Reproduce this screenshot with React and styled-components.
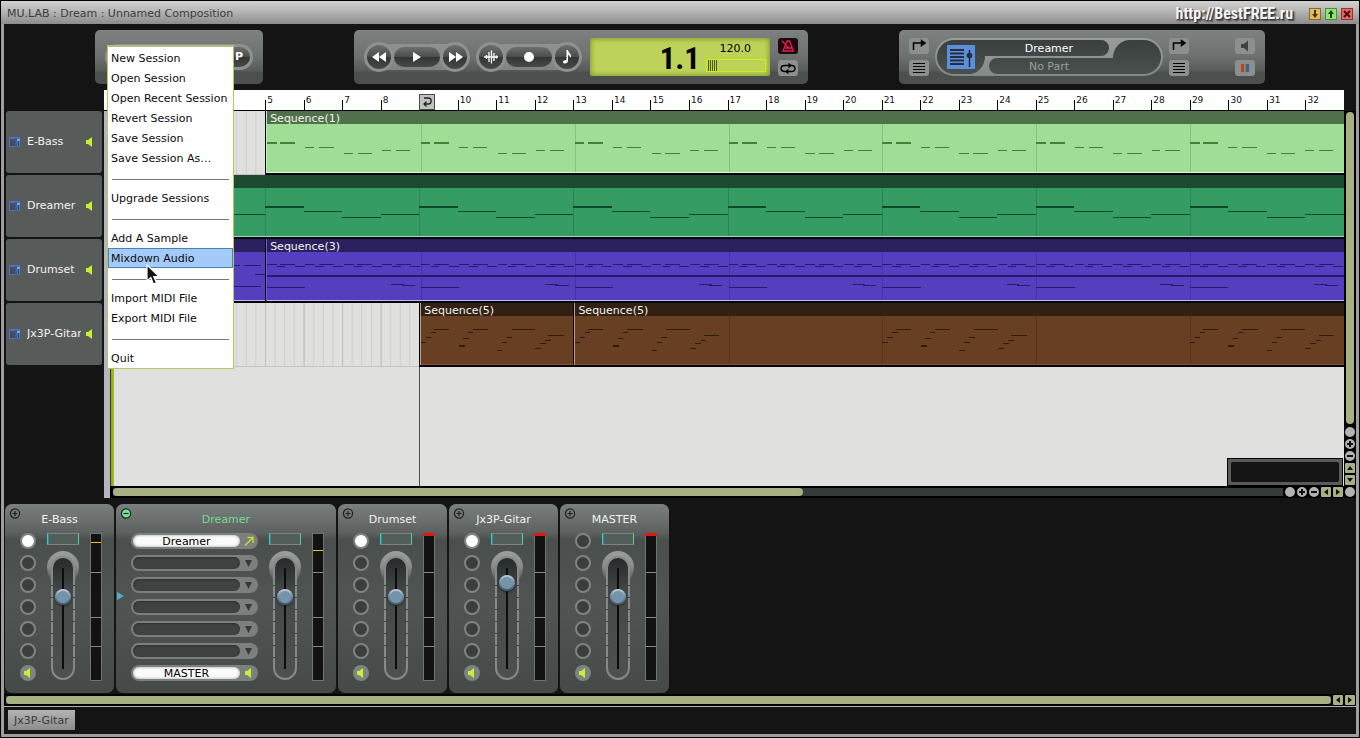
import React from "react";
import styled, { createGlobalStyle, css } from "styled-components";

const GlobalStyle = createGlobalStyle`
  * {
    box-sizing: border-box;
  }

  body {
    margin: 0;
    background: #000;
    font-family: "DejaVu Sans", "Liberation Sans", sans-serif;
    font-size: 11px;
    line-height: 14px;
  }

  button {
    margin: 0;
    padding: 0;
    border: 0;
    font: inherit;
    color: inherit;
    background: none;
  }

  svg {
    display: block;
    flex: none;
  }
`;

const Window = styled.div`
  min-height: 100vh;
  border: 1px solid #000;
  display: flex;
  flex-direction: column;
`;

const TitleBar = styled.header`
  height: 23px;
  padding: 3px 6px 0;
  display: flex;
  align-items: center;
  gap: 4px;
  color: #3c3c3c;
  background: linear-gradient(#d2d2d2, #b9b9b9 40%, #8c8c8c);
`;

const WindowTitle = styled.h1`
  margin: 0;
  flex: 1;
  font-size: 11px;
  font-weight: 400;
`;

const SiteLink = styled.a`
  margin-right: 12px;
  font-family: "Liberation Sans Narrow", "Roboto Condensed", "Liberation Sans", sans-serif;
  font-size: 16px;
  font-weight: 700;
  color: #f4f4f4;
  text-decoration: none;
  text-shadow: 1px 1px 1px #333, 2px 2px 2px #444;
`;

const WindowButton = styled.button`
  width: 12px;
  height: 12px;
  border: 1px solid ${(p) => p.$edge};
  background: ${(p) => p.$fill};
`;

const Body = styled.div`
  flex: 1;
  display: flex;
  flex-direction: column;
  border: 3px solid #a09da0;
  border-top: 0;
  background: #141414;
`;

/* ---------- toolbar ---------- */

const Toolbar = styled.div`
  height: 66px;
  display: flex;
  align-items: center;
  justify-content: space-evenly;
`;

const Panel = styled.section`
  position: relative;
  height: 54px;
  padding: 0 10px;
  display: flex;
  align-items: center;
  border-radius: 5px;
  background: linear-gradient(#7d817f, #6c706e 50%, #565b59 76%, #4b504e 78%, #4b504e);
`;

const ButtonGroup = styled.div`
  display: flex;
  align-items: center;
  margin-right: ${(p) => p.$after}px;
  background: linear-gradient(#8d918f, #7e8280) center / 76px 26px no-repeat;
`;

const darkGlass = css`
  background: linear-gradient(#6a6f6d, #4b504e 48%, #323735 52%, #464b49);
`;

const RoundButton = styled.button`
  width: 30px;
  height: 30px;
  border: 3px solid #8d918f;
  border-radius: 50%;
  ${darkGlass}
`;

const PillButton = styled.button`
  width: 46px;
  height: 20px;
  border-radius: 10px;
  ${darkGlass}
`;

const HelpGroup = styled.div`
  width: 148px;
  height: 26px;
  padding: 3px;
  border-radius: 13px;
  display: flex;
  gap: 3px;
  background: #8d918f;
`;

const HelpButton = styled.button`
  flex: 1;
  padding-right: 7px;
  border-radius: 10px;
  color: #fff;
  font-weight: 700;
  text-align: right;
  ${darkGlass}
`;

const Lcd = styled.div`
  width: 180px;
  height: 38px;
  padding-right: 4px;
  margin-right: 8px;
  display: flex;
  align-items: center;
  justify-content: flex-end;
  gap: 6px;
  border-radius: 3px;
  color: #000;
  background: #bcd258;
  box-shadow: inset 0 0 5px 1px #7f9a2c;
`;

const Position = styled.output`
  padding-top: 3px;
  font-family: "Liberation Sans Narrow", "Roboto Condensed", "Liberation Sans", sans-serif;
  font-size: 31px;
  font-weight: 700;
  line-height: 32px;
`;

const TempoColumn = styled.div`
  width: 60px;
  display: flex;
  flex-direction: column;
`;

const Tempo = styled.output`
  padding-right: 15px;
  line-height: 12px;
  text-align: right;
`;

const CpuBar = styled.div`
  height: 13px;
  margin-top: 4px;
  border: 1px solid #d0f010;
  background: repeating-linear-gradient(90deg, #4c5a17 0 1px, transparent 1px 2px) 1px 0 / 9px 100%
    no-repeat;
`;

const SmallColumn = styled.div`
  display: flex;
  flex-direction: column;
  gap: 6px;
  margin-left: ${(p) => p.$before || 0}px;
`;

const SmallButton = styled.button`
  width: 20px;
  height: 16px;
  border-radius: 3px;
  background: ${(p) => (p.$active ? "#1d0a10" : "#8b8f8d")};
`;

const Capsule = styled.div`
  display: grid;
  margin: 0 6px;

  > * {
    grid-area: 1 / 1;
  }
`;

const CapsuleText = styled.div`
  padding: 2px 0 0;
  display: grid;
  grid-template-rows: 18px 18px;
  text-align: center;
  line-height: 18px;
`;

const ModuleName = styled.span`
  color: ${(p) => (p.$dim ? "#9a9e9c" : "#fff")};
`;

/* ---------- menu ---------- */

const Menu = styled.ul`
  position: absolute;
  z-index: 5;
  top: 15px;
  left: 12px;
  width: 127px;
  margin: 0;
  padding: 1px 0 0;
  list-style: none;
  border: 1px solid #b4c85c;
  border-top: 2px solid #b2bd84;
  background: #fff;
  color: #0c0c0c;
`;

const MenuItem = styled.button`
  display: block;
  width: 100%;
  height: 20px;
  padding: 2px 0 0 2px;
  text-align: left;
  white-space: nowrap;
  border: 1px solid ${(p) => (p.$selected ? "#4682b4" : "#fff")};
  background: ${(p) => (p.$selected ? "#a3caf8" : "#fff")};
`;

const MenuLine = styled.li`
  height: 20px;
  padding: 11px 4px 0;

  &::after {
    content: "";
    display: block;
    border-top: 1px solid #6f7a80;
  }
`;

const Pointer = styled.svg`
  position: absolute;
  z-index: 6;
  top: 234px;
  left: 50px;
`;

/* ---------- arranger ---------- */

const Arranger = styled.div`
  flex: 1;
  display: grid;
  grid-template-columns: 100px minmax(0, 1fr) 12px;
  grid-template-rows: 21px minmax(0, 1fr) 12px;
`;

const TrackList = styled.div`
  grid-area: 2 / 1;
  padding-left: 2px;
`;

const TrackHead = styled.div`
  height: 62px;
  width: 96px;
  margin-bottom: 2px;
  padding: 0 7px 0 3px;
  display: flex;
  align-items: center;
  gap: 4px;
  border-radius: 3px;
  background: #575c5a;
  color: #f2f2f2;
`;

const TrackName = styled.span`
  flex: 1;
  margin-left: 3px;
  overflow: hidden;
  white-space: nowrap;
  line-height: 16px;
`;

const Ruler = styled.div`
  grid-area: 1 / 2;
  padding-left: 7px;
  display: grid;
  grid-template-columns: repeat(32, minmax(0, 1fr));
  border-bottom: 1px solid #000;
  background: #fff;
`;

const Bar = styled.span`
  padding: 5px 0 0 2px;
  font-size: 9px;
  line-height: 10px;
  color: #111;
  background: linear-gradient(#000, #000) left bottom / 1px 10px no-repeat;
`;

const LoopFlag = styled.button`
  width: 16px;
  height: 16px;
  margin-top: 4px;
  border: 1px solid #4a4a4a;
  background: #c2c2c2;
`;

const Lanes = styled.div`
  grid-area: 2 / 2;
  position: relative;
  display: flex;
  flex-direction: column;
  border-left: 6px solid #b5b5c1;
  padding-left: 1px;
  background: #e0e0de;
`;

const Lane = styled.div`
  height: 64px;
  display: grid;
  grid-template-columns: repeat(32, minmax(0, 1fr));
  border-bottom: 1px solid #c4c4c2;
  background-image: linear-gradient(90deg, #c0c0be 1px, transparent 1px),
    linear-gradient(90deg, #cdcdcb 1px, transparent 1px);
  background-size: calc(100% / 32) 100%, calc(100% / 128) 100%;
`;

const Clip = styled.div`
  grid-column: ${(p) => p.$from} / ${(p) => p.$to};
  height: 64px;
  padding-left: 2px;
  display: flex;
  flex-direction: column;
  border-bottom: 2px solid #06060c;
  box-shadow: inset 1px 0 #000, inset 2px 0 ${(p) => p.$colors.side};
  background: ${(p) => p.$colors.body};
`;

const OpenClip = styled(Clip)`
  padding-left: 0;
  box-shadow: none;
`;

const ClipName = styled.div`
  height: 13px;
  padding-left: 3px;
  line-height: 16px;
  color: #f4f4ea;
  background: ${(p) => p.$colors.head};
`;

const ClipNotes = styled.svg`
  width: 100%;
  height: 49px;
  border-bottom: 1px solid ${(p) => p.$edge};
`;

const EmptyArea = styled.div`
  flex: 1;
  display: grid;
  grid-template-columns: repeat(32, minmax(0, 1fr));
  grid-template-rows: minmax(0, 1fr);
`;

const LoopLine = styled.div`
  grid-column: 9;
  border-left: 1px solid #4c4c4c;
`;

const Playhead = styled.div`
  position: absolute;
  top: 0;
  bottom: 0;
  left: 0;
  width: 4px;
  border-left: 1px solid #2f4a08;
  background: linear-gradient(90deg, #86a81c, #a9bf2c);
`;

const Overview = styled.div`
  position: absolute;
  right: 1px;
  bottom: 0;
  width: 116px;
  height: 28px;
  border: 1px solid #000;
  padding: 3px;
  background: #5a5a5a;

  &::after {
    content: "";
    display: block;
    height: 20px;
    border-radius: 2px;
    background: #141414;
  }
`;

const ScrollRow = styled.div`
  display: flex;
  align-items: center;
  gap: 2px;
  height: 12px;
  padding: 0 1px 0 ${(p) => p.$start}px;
  background: #000;
`;

const ArrangerScroll = styled(ScrollRow)`
  grid-area: 3 / 2;
  border-left: 6px solid #b5b5c1;
`;

const ScrollColumn = styled.div`
  grid-area: 2 / 3;
  padding: 1px 0;
  display: flex;
  flex-direction: column;
  align-items: center;
  gap: 2px;
  background: #000;
`;

const Corner = styled.div`
  grid-area: 3 / 3;
  display: flex;
  align-items: center;
  justify-content: center;
  background: #000;
`;

const Track = styled.div`
  flex: 1;
  height: 8px;
  background: #363a38;
`;

const VerticalTrack = styled.div`
  flex: 1;
  width: 8px;
  margin-bottom: 1px;
  border-radius: 4px;
  background: #a7b083;
`;

const Thumb = styled.div`
  width: ${(p) => p.$size};
  height: 8px;
  border-radius: 4px;
  background: #a7b083;
`;

const ScrollButton = styled.button`
  width: 10px;
  height: 10px;
  flex: none;
  border-radius: ${(p) => (p.$round ? "50%" : "1px")};
  background: ${(p) => (p.$round ? "#b2b2b2" : "#a7b083")};
`;

/* ---------- mixer ---------- */

const Mixer = styled.div`
  padding: 6px 1px 1px;
  display: flex;
  gap: 2px;
`;

const Strip = styled.section`
  position: relative;
  height: 189px;
  border-radius: 7px;
  background: linear-gradient(#7b7f7d, #5c6160 29px, #4a4f4d 36px, #505553 100px, #454a48);
`;

const StripHead = styled.div`
  height: 29px;
  padding: 4px 4px 0;
  display: grid;
  grid-template-columns: 12px 1fr 12px;
  color: ${(p) => (p.$open ? "#70dc94" : "#f2f2f2")};
`;

const ExpandButton = styled.button`
  width: 12px;
  height: 12px;
`;

const StripName = styled.h2`
  margin: 0;
  padding-top: 5px;
  font-size: 11px;
  font-weight: 400;
  text-align: center;
`;

const StripBody = styled.div`
  height: 148px;
  padding: 0 12px 0 15px;
  display: flex;
  gap: 11px;
`;

const SlotColumn = styled.div`
  display: flex;
  flex-direction: column;
  gap: 6px;
`;

const SlotToggle = styled.input`
  appearance: none;
  width: 16px;
  height: 16px;
  margin: 0;
  border: 2px solid #7f8381;
  border-radius: 50%;
  background: #3a3f3d;

  &:checked {
    background: #fff;
  }
`;

const SpeakerButton = styled.button`
  width: 16px;
  height: 16px;
  padding-left: 3px;
  border-radius: 50%;
  background: #7f8381;
`;

const Slot = styled.div`
  width: 127px;
  height: 16px;
  padding: 2px 4px 2px 2px;
  display: flex;
  align-items: center;
  gap: 4px;
  border-radius: 8px;
  background: #7b7f7d;
`;

const SlotName = styled.button`
  width: 108px;
  height: 12px;
  border-radius: 6px;
  line-height: 14px;
  color: #000;
  background: ${(p) => (p.$used ? "#fbfbfb" : "#3e4341")};
  box-shadow: ${(p) => (p.$used ? "inset 0 0 3px #999" : "inset 0 1px 2px #2c302e")};
`;

const SlotButton = styled.button`
  width: 10px;
  height: 12px;
`;

const FaderColumn = styled.div`
  display: flex;
  flex-direction: column;
  gap: 6px;
`;

const PanBox = styled.div`
  width: 32px;
  height: 12px;
  border: 1px solid #7f8381;
  border-left-color: #3fc6d0;
  border-right-color: #4fd492;
  background: #535e5b;
  box-shadow: inset 1px 0 #2f8d94;
`;

const FaderCell = styled.div`
  display: grid;
  justify-items: center;

  > * {
    grid-area: 1 / 1;
  }
`;

const Fader = styled.input`
  appearance: none;
  writing-mode: vertical-lr;
  direction: rtl;
  width: 16px;
  height: 130px;
  margin: 0;
  background: transparent;

  &::-webkit-slider-thumb {
    appearance: none;
    width: 16px;
    height: 16px;
    border-radius: 50%;
    background: radial-gradient(#7593ab 50%, transparent 56%),
      linear-gradient(#c4d6e2, #6f8ba2 50%, #3e5468);
    box-shadow: 0 1px 2px #222;
  }
`;

const PortMark = styled.svg`
  position: absolute;
  left: 1px;
  top: 88px;
`;

const Footer = styled.footer`
  height: 28px;
  padding: 3px 4px;
  border-top: 1px solid #b5b2b5;
`;

const TabButton = styled.button`
  height: 20px;
  padding: 1px 6px 0;
  color: #3a3a3a;
  background: linear-gradient(#b4b4b4, #8c8c8c);
`;

/* ---------- icons ---------- */

const Speaker = () => (
  <svg width="10" height="10" viewBox="0 0 10 10" fill="#c6f032">
    <path d="M1 3h2L7 0v10L3 7H1z" />
  </svg>
);

const TrackIcon = () => (
  <svg width="11" height="10" viewBox="0 0 11 10">
    <path d="M0 0h11v10H0z" fill="#4a76bd" />
    <path d="M1 2h5v7H1z" fill="#414c60" />
    <path d="M7 1v9M9.500 4v5" stroke="#2c4372" />
    <path d="M8 2h3v2H8z" fill="#7ba4e4" />
  </svg>
);

const Glyph = ({ d, fill = "#fff", stroke }) => (
  <svg width="24" height="24" viewBox="0 0 24 24" fill={fill} stroke={stroke} strokeWidth="1.3">
    <path d={d} />
  </svg>
);

const PillGlyph = ({ d }) => (
  <svg width="46" height="20" viewBox="0 0 46 20" fill="#fff">
    <path d={d} />
  </svg>
);

const ROUTE = "M4.500 12V5H16M12.500 2.500 16 5l-3.500 2.500z";
const LINES = "M4 3.500h12M4 6.500h12M4 9.500h12M4 12.500h12";

const SmallIcon = ({ d, color = "#000", fill = "none", width = 1 }) => (
  <svg width="20" height="16" viewBox="0 0 20 16" fill={fill} stroke={color} strokeWidth={width}>
    <path d={d} />
  </svg>
);

const SCROLL_ICONS = {
  plus: "M2 4h2V2h2v2h2v2H6v2H4V6H2z",
  minus: "M2 4h6v2H2z",
  left: "M7 2v6L3 5z",
  right: "M3 2v6l4-3z",
  up: "M2 7h6L5 3z",
  down: "M2 3h6L5 7z",
};

function ScrollIcon({ name, label }) {
  return (
    <ScrollButton $round={!name || name === "plus" || name === "minus"} aria-label={label}>
      <svg width="10" height="10" viewBox="0 0 10 10" fill="#111">
        {name && <path d={SCROLL_ICONS[name]} />}
      </svg>
    </ScrollButton>
  );
}

/* ---------- data ---------- */

const MENU = [
  "New Session",
  "Open Session",
  "Open Recent Session",
  "Revert Session",
  "Save Session",
  "Save Session As…",
  null,
  "Upgrade Sessions",
  null,
  "Add A Sample",
  "Mixdown Audio",
  null,
  "Import MIDI File",
  "Export MIDI File",
  null,
  "Quit",
];

// notes are [start, end, y, height], start and end in hundredths of a bar
const BASS = [
  [0, 25, 18, 2], [35, 74, 18, 2],
  [100, 123, 23, 1], [136, 173, 23, 1],
  [200, 224, 29, 1], [236, 274, 29, 1],
  [300, 323, 26, 1], [336, 373, 26, 1],
];

const PAD = [
  [0, 100, 18, 2],
  [100, 200, 23, 1],
  [200, 300, 29, 1],
  [300, 400, 26, 1],
];

const HATS = [0, 100, 200, 300].flatMap((x) => [
  [x, x + 25, 12, 1],
  [x + 35, x + 74, 12, 1],
  [x + 26, x + 48, 14, 1],
  [x + 72, x + 98, 14, 1],
]);

const DRUMS = [...HATS, [0, 400, 23, 2], [0, 100, 35, 1], [323, 356, 32, 1], [350, 384, 33, 1]];

const DRUM_INTRO = [[300, 335, 13, 1], [345, 388, 13, 1], [374, 400, 22, 1], [300, 390, 34, 1]];

const GUITAR = [
  [0, 14, 26, 1], [12, 27, 21, 1], [25, 40, 16, 1], [35, 74, 13, 1],
  [100, 115, 29, 2], [111, 126, 22, 1], [124, 138, 16, 1], [136, 177, 13, 1],
  [200, 214, 34, 1], [213, 227, 26, 1], [225, 240, 21, 1], [238, 300, 13, 1],
  [300, 315, 32, 1], [313, 328, 27, 1], [327, 341, 24, 1], [335, 375, 19, 1],
];

const GREEN = {
  body: "#a0de97", head: "#50704c", line: "#86c47e", note: "#3f8432", edge: "#e4f6e0", side: "#c4ecbe",
};
const TEAL = {
  body: "#359c63", head: "#1c4b30", line: "#2b8453", note: "#0e4a2a", edge: "#a9d4bc", side: "#359c63",
};
const VIOLET = {
  body: "#553fbe", head: "#2b205e", line: "#4733a2", note: "#291a70", edge: "#c4bbea", side: "#6f5ccc",
};
const BROWN = {
  body: "#683f23", head: "#312115", line: "#58341c", note: "#321a08", edge: "#7c553a", side: "#b9a090",
};

const TRACKS = [
  { name: "E-Bass", clips: [{ from: 5, to: 33, name: "Sequence(1)", notes: BASS, colors: GREEN }] },
  { name: "Dreamer", clips: [{ from: 1, to: 33, notes: PAD, colors: TEAL }] },
  {
    name: "Drumset",
    clips: [
      { from: 1, to: 5, notes: DRUM_INTRO, colors: VIOLET },
      { from: 5, to: 33, name: "Sequence(3)", notes: DRUMS, colors: VIOLET },
    ],
  },
  {
    name: "Jx3P-Gitar",
    clips: [
      { from: 9, to: 13, name: "Sequence(5)", notes: GUITAR, colors: BROWN },
      { from: 13, to: 33, name: "Sequence(5)", notes: GUITAR, colors: BROWN, every: 8 },
    ],
  },
];

const STRIPS = [
  { name: "E-Bass", on: true, level: 67, peak: 9, color: "#f0b828" },
  { name: "Dreamer", open: true, level: 67, peak: 17, color: "#d8d020" },
  { name: "Drumset", on: true, level: 67, clip: true },
  { name: "Jx3P-Gitar", on: true, level: 79, clip: true },
  { name: "MASTER", level: 67, clip: true },
];

/* ---------- parts ---------- */

function SequenceClip({ from, to, name, notes, colors, every = 4 }) {
  const bars = to - from;
  const starts = [];
  for (let bar = 0; bar < bars; bar += every) starts.push(bar * 100);
  const lines = [];
  for (let bar = 4; bar < bars; bar += 4) lines.push(bar * 100);
  const Box = name ? Clip : OpenClip;

  return (
    <Box $from={from} $to={to} $colors={colors}>
      <ClipName $colors={colors}>{name}</ClipName>
      <ClipNotes
        viewBox={`0 0 ${bars * 100} 48`}
        preserveAspectRatio="none"
        shapeRendering="crispEdges"
        $edge={colors.edge}
      >
        {lines.map((x) => (
          <rect key={x} x={x} y="0" width="2.6" height="48" fill={colors.line} />
        ))}
        {starts.map((x) =>
          notes.map(([a, b, y, h], i) => (
            <rect key={`${x}-${i}`} x={x + a} y={y} width={b - a} height={h} fill={colors.note} />
          ))
        )}
      </ClipNotes>
    </Box>
  );
}

function FaderTrack() {
  const marks = [34, 46, 58, 70, 82, 94, 106];
  return (
    <svg width="32" height="130" viewBox="0 0 32 130">
      <defs>
        <linearGradient id="ring" x1="0" y1="0" x2="0" y2="1">
          <stop offset="0" stopColor="#9a9e9c" />
          <stop offset="0.5" stopColor="#8a8e8c" />
          <stop offset="1" stopColor="#5a5f5d" />
        </linearGradient>
        <linearGradient id="well" x1="0" y1="0" x2="0" y2="1">
          <stop offset="0" stopColor="#25292a" />
          <stop offset="0.3" stopColor="#454a48" />
          <stop offset="1" stopColor="#4c514f" />
        </linearGradient>
      </defs>
      <path d="M0 16a16 16 0 0 1 32 0c0 5-2 9-4 13H4c-2-4-4-8-4-13z" fill="url(#ring)" />
      <rect x="5" y="6" width="22" height="122" rx="11" fill="url(#well)" stroke="#858987" strokeWidth="2" />
      {marks.map((y) => (
        <path key={y} d={`M4 ${y}.5h3M25 ${y}.5h3`} stroke="#3d4240" />
      ))}
      <path d="M16 17v101" stroke="#0c0c0c" strokeWidth="2" />
    </svg>
  );
}

function Meter({ peak, color, clip }) {
  return (
    <svg width="12" height="148" viewBox="0 0 12 148">
      <rect x="0.5" y="0.5" width="11" height="147" fill="#121212" stroke="#6f7371" />
      <path d="M1 39.500h10M1 84.500h10M1 113.500h10" stroke="#858987" />
      {clip ? (
        <rect x="0" y="0" width="12" height="3" fill="#e01818" />
      ) : (
        <rect x="1" y={peak} width="10" height="1" fill={color} />
      )}
    </svg>
  );
}

function RackSlots() {
  return (
    <SlotColumn>
      <Slot>
        <SlotName $used>Dreamer</SlotName>
        <SlotButton aria-label="Open Dreamer">
          <svg width="10" height="12" viewBox="0 0 10 12" fill="none" stroke="#c9de2a" strokeWidth="1.3">
            <path d="M1 10.500 8.500 3M3.500 2.500H9V8" />
          </svg>
        </SlotButton>
      </Slot>
      {[2, 3, 4, 5, 6].map((n) => (
        <Slot key={n}>
          <SlotName aria-label={`Slot ${n}`} />
          <SlotButton aria-label={`Choose module ${n}`}>
            <svg width="9" height="12" viewBox="0 0 9 12" fill="#343836">
              <path d="M1 3h7L4.500 10z" />
            </svg>
          </SlotButton>
        </Slot>
      ))}
      <Slot>
        <SlotName $used>MASTER</SlotName>
        <SlotButton aria-label="Dreamer output">
          <Speaker />
        </SlotButton>
      </Slot>
    </SlotColumn>
  );
}

function MixerStrip({ name, open, on, level, peak, color, clip }) {
  return (
    <Strip>
      <StripHead $open={open}>
        <ExpandButton aria-label={`${open ? "Collapse" : "Expand"} ${name}`}>
          <svg width="12" height="12" viewBox="0 0 12 12" fill="none" stroke="#1e2220" strokeWidth="1.200">
            <circle cx="6" cy="5.500" r="4.600" fill={open ? "#70e890" : "none"} />
            <path d={open ? "M3.500 5.500h5" : "M3.500 5.500h5M6 3v5"} />
          </svg>
        </ExpandButton>
        <StripName>{name}</StripName>
      </StripHead>
      <StripBody>
        {open ? (
          <RackSlots />
        ) : (
          <SlotColumn>
            {[1, 2, 3, 4, 5, 6].map((n) => (
              <SlotToggle
                key={n}
                type="checkbox"
                aria-label={`${name} slot ${n}`}
                defaultChecked={on && n === 1}
              />
            ))}
            <SpeakerButton aria-label={`${name} output`}>
              <Speaker />
            </SpeakerButton>
          </SlotColumn>
        )}
        <FaderColumn>
          <PanBox />
          <FaderCell>
            <FaderTrack />
            <Fader type="range" aria-label={`${name} volume`} defaultValue={level} />
          </FaderCell>
        </FaderColumn>
        <Meter peak={peak} color={color} clip={clip} />
      </StripBody>
      {open && (
        <PortMark width="7" height="8" viewBox="0 0 7 8">
          <path d="M0 0l7 4-7 4z" fill="#5aa6cc" />
        </PortMark>
      )}
    </Strip>
  );
}

function SessionMenu() {
  return (
    <Menu>
      {MENU.map((label, i) =>
        label ? (
          <li key={label}>
            <MenuItem $selected={label === "Mixdown Audio"}>{label}</MenuItem>
          </li>
        ) : (
          <MenuLine key={i} />
        )
      )}
    </Menu>
  );
}

function Transport() {
  return (
    <Panel>
      <ButtonGroup $after={6}>
        <RoundButton aria-label="Rewind">
          <Glyph d="M12 7v10L5 12zM19 7v10l-7-5z" />
        </RoundButton>
        <PillButton aria-label="Play">
          <PillGlyph d="M19 5v10l8-5z" />
        </PillButton>
        <RoundButton aria-label="Forward">
          <Glyph d="M6 7v10l7-5zM13 7v10l7-5z" />
        </RoundButton>
      </ButtonGroup>
      <ButtonGroup $after={8}>
        <RoundButton aria-label="Record audio">
          <Glyph
            d="M5 12h14M7.500 10v4M10 7v10M12.500 5.500v13M15 8v8M17.500 10.500v3"
            fill="none"
            stroke="#fff"
          />
        </RoundButton>
        <PillButton aria-label="Record">
          <PillGlyph d="M18 10a5 5 0 1 1 10 0a5 5 0 1 1-10 0z" />
        </PillButton>
        <RoundButton aria-label="Record MIDI">
          <Glyph d="M11.500 5h1.500c0 2.500 3 3 3 6.500l-1 1.500c0-2-1-2.800-2-3.200V16c0 1.500-1.500 2.500-3 2.500S8 17.800 8 17s1-2 3.500-2z" />
        </RoundButton>
      </ButtonGroup>
      <Lcd>
        <Position>1.1</Position>
        <TempoColumn>
          <Tempo>120.0</Tempo>
          <CpuBar />
        </TempoColumn>
      </Lcd>
      <SmallColumn>
        <SmallButton $active aria-label="Metronome">
          <SmallIcon d="M9 3h2.500l4 10H5zM7 10h7M4 3l8 8" color="#e81c50" width={1.3} />
        </SmallButton>
        <SmallButton aria-label="Loop">
          <SmallIcon
            d="M8 11.500H6.500a3.500 3 0 0 1 0-6H12M10.500 3.500l2.500 2-2.500 2M12 5.500h1.500a3.500 3 0 0 1 0 6H8.500M10.500 9.500 8 11.500l2.500 2"
            width={1.4}
          />
        </SmallButton>
      </SmallColumn>
    </Panel>
  );
}

function ModulePanel() {
  return (
    <Panel>
      <SmallColumn>
        <SmallButton aria-label="Go to module">
          <SmallIcon d={ROUTE} width={1.5} />
        </SmallButton>
        <SmallButton aria-label="Module list">
          <SmallIcon d={LINES} />
        </SmallButton>
      </SmallColumn>
      <Capsule>
        <svg width="228" height="38" viewBox="0 0 228 38">
          <defs>
            <linearGradient id="rim" x1="0" y1="0" x2="0" y2="1">
              <stop offset="0" stopColor="#989c9a" />
              <stop offset="1" stopColor="#848886" />
            </linearGradient>
            <linearGradient id="inset" x1="0" y1="0" x2="0" y2="1">
              <stop offset="0" stopColor="#3a3f3d" />
              <stop offset="1" stopColor="#4a504e" />
            </linearGradient>
          </defs>
          <rect width="228" height="38" rx="19" fill="url(#rim)" />
          <path
            d="M19 2H166a8 8 0 0 1 0 16H50a16 18 0 0 1-16 18H19a17 17 0 0 1 0-34z"
            fill="url(#inset)"
          />
          <path
            d="M62 20H178a17 18 0 0 1 17-18h14a17 17 0 0 1 0 34H62a8 8 0 0 1 0-16z"
            fill="url(#inset)"
          />
          <rect x="12" y="7" width="28" height="24" fill="#5c8fdb" />
          <path d="M15 12h14M15 15.500h14M15 19h14M15 22.500h14M15 26h14" stroke="#252e3c" strokeWidth="1.800" />
          <path d="M34.500 12v17" stroke="#1c222c" strokeWidth="1.400" />
          <circle cx="34.500" cy="17.500" r="2.800" fill="#252e3c" />
        </svg>
        <CapsuleText>
          <ModuleName>Dreamer</ModuleName>
          <ModuleName $dim>No Part</ModuleName>
        </CapsuleText>
      </Capsule>
      <SmallColumn>
        <SmallButton aria-label="Go to part">
          <SmallIcon d={ROUTE} width={1.5} />
        </SmallButton>
        <SmallButton aria-label="Part list">
          <SmallIcon d={LINES} />
        </SmallButton>
      </SmallColumn>
      <SmallColumn $before={46}>
        <SmallButton aria-label="Audio">
          <SmallIcon d="M6 6h3l4-3.500v11L9 10H6z" color="none" fill="#3c403e" />
        </SmallButton>
        <SmallButton aria-label="Colors">
          <svg width="20" height="16" viewBox="0 0 20 16">
            <path d="M6 4h3v8H6z" fill="#b84038" />
            <path d="M9 4h2v8H9z" fill="#8a8c40" />
            <path d="M11 4h3v8h-3z" fill="#3a5ca8" />
          </svg>
        </SmallButton>
      </SmallColumn>
    </Panel>
  );
}

export default function App() {
  return (
    <Window>
      <GlobalStyle />
      <TitleBar>
        <WindowTitle>MU.LAB : Dream : Unnamed Composition</WindowTitle>
        <SiteLink href="#">http://BestFREE.ru</SiteLink>
        <WindowButton $edge="#8c6a20" $fill="#e0bd62" aria-label="Minimize">
          <svg width="10" height="10" viewBox="0 0 10 10" fill="#4a3000">
            <path d="M4 1h2v4h2L5 9 2 5h2z" />
          </svg>
        </WindowButton>
        <WindowButton $edge="#4a9030" $fill="#98e078" aria-label="Maximize">
          <svg width="10" height="10" viewBox="0 0 10 10" fill="#104a08">
            <path d="M4 9h2V5h2L5 1 2 5h2z" />
          </svg>
        </WindowButton>
        <WindowButton $edge="#983030" $fill="#e06c68" aria-label="Close">
          <svg width="10" height="10" viewBox="0 0 10 10" stroke="#500808" strokeWidth="2">
            <path d="M2 2l6 6M8 2 2 8" />
          </svg>
        </WindowButton>
      </TitleBar>

      <Body>
        <Toolbar>
          <Panel>
            <HelpGroup>
              <HelpButton>P</HelpButton>
            </HelpGroup>
            <SessionMenu />
            <Pointer width="16" height="22" viewBox="0 0 16 22">
              <path
                d="M2 1v16l3.800-3.500L8.500 20l3-1.300-2.800-6.200H14z"
                fill="#111"
                stroke="#fff"
                strokeWidth="1.200"
              />
            </Pointer>
          </Panel>
          <Transport />
          <ModulePanel />
        </Toolbar>

        <Arranger>
          <TrackList>
            {TRACKS.map((track) => (
              <TrackHead key={track.name}>
                <TrackIcon />
                <TrackName>{track.name}</TrackName>
                <Speaker />
              </TrackHead>
            ))}
          </TrackList>
          <Ruler>
            {Array.from({ length: 32 }, (_, i) =>
              i === 8 ? (
                <LoopFlag key={i} aria-label="Loop start">
                  <svg width="14" height="14" viewBox="0 0 14 14" fill="none" stroke="#222" strokeWidth="1.300">
                    <path d="M4 3h4.500C12 3 12 9 8.500 9H4M6.500 6.500 4 9l2.500 2.500" />
                  </svg>
                </LoopFlag>
              ) : (
                <Bar key={i}>{i > 3 && i + 1}</Bar>
              )
            )}
          </Ruler>
          <Lanes>
            {TRACKS.map((track) => (
              <Lane key={track.name}>
                {track.clips.map((clip) => (
                  <SequenceClip key={clip.from} {...clip} />
                ))}
              </Lane>
            ))}
            <EmptyArea>
              <LoopLine />
            </EmptyArea>
            <Playhead />
            <Overview />
          </Lanes>
          <ScrollColumn>
            <VerticalTrack />
            <ScrollIcon label="Fit height" />
            <ScrollIcon name="plus" label="Taller" />
            <ScrollIcon name="minus" label="Shorter" />
            <ScrollIcon name="up" label="Scroll up" />
            <ScrollIcon name="down" label="Scroll down" />
          </ScrollColumn>
          <ArrangerScroll $start={3}>
            <Track>
              <Thumb $size="59%" />
            </Track>
            <ScrollIcon label="Fit width" />
            <ScrollIcon name="plus" label="Zoom in" />
            <ScrollIcon name="minus" label="Zoom out" />
            <ScrollIcon name="left" label="Scroll left" />
            <ScrollIcon name="right" label="Scroll right" />
          </ArrangerScroll>
          <Corner>
            <ScrollIcon label="Fit all" />
          </Corner>
        </Arranger>

        <Mixer>
          {STRIPS.map((strip) => (
            <MixerStrip key={strip.name} {...strip} />
          ))}
        </Mixer>
        <ScrollRow $start={2}>
          <Track>
            <Thumb $size="100%" />
          </Track>
          <ScrollIcon name="left" label="Scroll mixer left" />
          <ScrollIcon name="right" label="Scroll mixer right" />
        </ScrollRow>
        <Footer>
          <TabButton>Jx3P-Gitar</TabButton>
        </Footer>
      </Body>
    </Window>
  );
}
